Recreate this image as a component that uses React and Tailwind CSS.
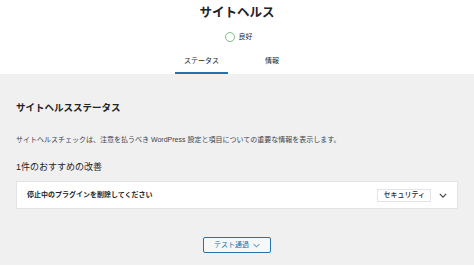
import React from 'react';

const Chevron = ({ className }) => (
  <svg viewBox="0 0 10 6" className={className} fill="none" stroke="currentColor" strokeWidth="1.4">
    <polyline points="1,1 5,5 9,1" />
  </svg>
);

const App = () => {
  return (
    <div className="w-[474px] h-[267px] bg-white text-[#1d2327] font-['Liberation_Sans','Noto_Sans_CJK_JP',sans-serif] overflow-hidden">
      <header className="flex flex-col items-center">
        <h1 className="pt-[5px] text-[12.5px] leading-[16px] font-bold">サイトヘルス</h1>
        <div className="mt-[11px] h-[10px] flex items-center gap-[4px] pl-[3px]">
          <span className="w-[10px] h-[10px] rounded-full border-[1.5px] border-[#7cbf86]"></span>
          <span className="text-[7px] leading-[10px]">良好</span>
        </div>
        <nav className="flex justify-center gap-[28px] pr-[11px]">
          <div className="w-[53px] pt-[14px] pb-[6px] text-center text-[7px] leading-[10px] border-b-2 border-[#2271b1]">
            ステータス
          </div>
          <div className="w-[32px] pt-[14px] pb-[6px] text-center text-[7px] leading-[10px] border-b-2 border-transparent">
            情報
          </div>
        </nav>
      </header>

      <main className="bg-[#f0f0f1] h-[191px] px-4">
        <h2 className="pt-[28px] text-[9.5px] leading-[12px] font-bold">サイトヘルスステータス</h2>
        <p className="mt-[21px] text-[7px] leading-[10px] text-[#3c434a]">
          サイトヘルスチェックは、注意を払うべき WordPress 設定と項目についての重要な情報を表示します。
        </p>
        <h3 className="mt-[16px] text-[9px] leading-[12px]">1件のおすすめの改善</h3>

        <div className="mt-[8px] h-[28px] bg-white border border-[#e2e4e7] flex items-center pl-[10px] pr-[10px]">
          <span className="flex-1 text-[7px] leading-[10px] font-semibold">停止中のプラグインを削除してください</span>
          <span className="h-[13px] px-[5px] flex items-center border border-[#e2e4e7] text-[7px] leading-[10px] font-medium">
            セキュリティ
          </span>
          <Chevron className="ml-[8px] w-[8px] h-[5px] text-[#3c434a]" />
        </div>

        <div className="mt-[28px] flex justify-center">
          <button className="h-[16px] w-[68px] flex items-center justify-center gap-[4px] border border-[#2271b1] bg-[#f6f7f7] rounded-[2px] text-[#2271b1] text-[7px] leading-[10px]">
            テスト通過
            <Chevron className="w-[7px] h-[5px]" />
          </button>
        </div>
      </main>
    </div>
  );
};

export default App;
